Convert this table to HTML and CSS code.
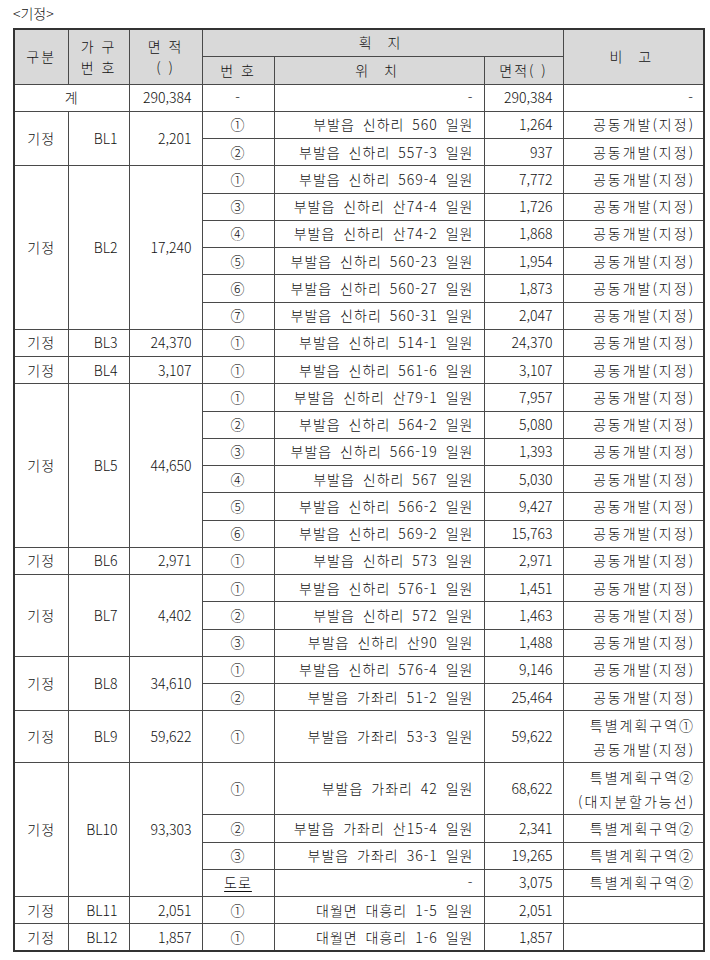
FILE: index.html
```html
<!DOCTYPE html>
<html lang="ko">
<head>
<meta charset="utf-8">
<link rel="stylesheet" href="styles.css">
</head>
<body>
<div class="page">
  <div class="title">&lt;기정&gt;</div>
  <table class="lots">
    <colgroup>
      <col class="c1"><col class="c2"><col class="c3"><col class="c4"><col class="c5"><col class="c6"><col class="c7">
    </colgroup>
    <thead>
      <tr class="h1">
        <th rowspan="2">구분</th>
        <th rowspan="2">가 구<br>번 호</th>
        <th rowspan="2">면 적<br>( )</th>
        <th colspan="3" class="wide">획 지</th>
        <th rowspan="2" class="wide">비 고</th>
      </tr>
      <tr class="h2">
        <th>번 호</th>
        <th class="wide">위 치</th>
        <th>면적( )</th>
      </tr>
    </thead>
    <tbody>
      <tr><td colspan="2" class="ctr">계</td><td class="num">290,384</td><td class="ctr">-</td><td class="loc">-</td><td class="num2">290,384</td><td class="rem">-</td></tr>

      <tr><td rowspan="2" class="ctr">기정</td><td rowspan="2" class="bl">BL1</td><td rowspan="2" class="num">2,201</td><td class="ctr">①</td><td class="loc">부발읍 신하리 560 일원</td><td class="num2">1,264</td><td class="rem">공동개발(지정)</td></tr>
      <tr><td class="ctr">②</td><td class="loc">부발읍 신하리 557-3 일원</td><td class="num2">937</td><td class="rem">공동개발(지정)</td></tr>

      <tr><td rowspan="6" class="ctr">기정</td><td rowspan="6" class="bl">BL2</td><td rowspan="6" class="num">17,240</td><td class="ctr">①</td><td class="loc">부발읍 신하리 569-4 일원</td><td class="num2">7,772</td><td class="rem">공동개발(지정)</td></tr>
      <tr><td class="ctr">③</td><td class="loc">부발읍 신하리 산74-4 일원</td><td class="num2">1,726</td><td class="rem">공동개발(지정)</td></tr>
      <tr><td class="ctr">④</td><td class="loc">부발읍 신하리 산74-2 일원</td><td class="num2">1,868</td><td class="rem">공동개발(지정)</td></tr>
      <tr><td class="ctr">⑤</td><td class="loc">부발읍 신하리 560-23 일원</td><td class="num2">1,954</td><td class="rem">공동개발(지정)</td></tr>
      <tr><td class="ctr">⑥</td><td class="loc">부발읍 신하리 560-27 일원</td><td class="num2">1,873</td><td class="rem">공동개발(지정)</td></tr>
      <tr><td class="ctr">⑦</td><td class="loc">부발읍 신하리 560-31 일원</td><td class="num2">2,047</td><td class="rem">공동개발(지정)</td></tr>

      <tr><td class="ctr">기정</td><td class="bl">BL3</td><td class="num">24,370</td><td class="ctr">①</td><td class="loc">부발읍 신하리 514-1 일원</td><td class="num2">24,370</td><td class="rem">공동개발(지정)</td></tr>
      <tr><td class="ctr">기정</td><td class="bl">BL4</td><td class="num">3,107</td><td class="ctr">①</td><td class="loc">부발읍 신하리 561-6 일원</td><td class="num2">3,107</td><td class="rem">공동개발(지정)</td></tr>

      <tr><td rowspan="6" class="ctr">기정</td><td rowspan="6" class="bl">BL5</td><td rowspan="6" class="num">44,650</td><td class="ctr">①</td><td class="loc">부발읍 신하리 산79-1 일원</td><td class="num2">7,957</td><td class="rem">공동개발(지정)</td></tr>
      <tr><td class="ctr">②</td><td class="loc">부발읍 신하리 564-2 일원</td><td class="num2">5,080</td><td class="rem">공동개발(지정)</td></tr>
      <tr><td class="ctr">③</td><td class="loc">부발읍 신하리 566-19 일원</td><td class="num2">1,393</td><td class="rem">공동개발(지정)</td></tr>
      <tr><td class="ctr">④</td><td class="loc">부발읍 신하리 567 일원</td><td class="num2">5,030</td><td class="rem">공동개발(지정)</td></tr>
      <tr><td class="ctr">⑤</td><td class="loc">부발읍 신하리 566-2 일원</td><td class="num2">9,427</td><td class="rem">공동개발(지정)</td></tr>
      <tr><td class="ctr">⑥</td><td class="loc">부발읍 신하리 569-2 일원</td><td class="num2">15,763</td><td class="rem">공동개발(지정)</td></tr>

      <tr><td class="ctr">기정</td><td class="bl">BL6</td><td class="num">2,971</td><td class="ctr">①</td><td class="loc">부발읍 신하리 573 일원</td><td class="num2">2,971</td><td class="rem">공동개발(지정)</td></tr>

      <tr><td rowspan="3" class="ctr">기정</td><td rowspan="3" class="bl">BL7</td><td rowspan="3" class="num">4,402</td><td class="ctr">①</td><td class="loc">부발읍 신하리 576-1 일원</td><td class="num2">1,451</td><td class="rem">공동개발(지정)</td></tr>
      <tr><td class="ctr">②</td><td class="loc">부발읍 신하리 572 일원</td><td class="num2">1,463</td><td class="rem">공동개발(지정)</td></tr>
      <tr><td class="ctr">③</td><td class="loc">부발읍 신하리 산90 일원</td><td class="num2">1,488</td><td class="rem">공동개발(지정)</td></tr>

      <tr><td rowspan="2" class="ctr">기정</td><td rowspan="2" class="bl">BL8</td><td rowspan="2" class="num">34,610</td><td class="ctr">①</td><td class="loc">부발읍 신하리 576-4 일원</td><td class="num2">9,146</td><td class="rem">공동개발(지정)</td></tr>
      <tr><td class="ctr">②</td><td class="loc">부발읍 가좌리 51-2 일원</td><td class="num2">25,464</td><td class="rem">공동개발(지정)</td></tr>

      <tr class="tall"><td class="ctr">기정</td><td class="bl">BL9</td><td class="num">59,622</td><td class="ctr">①</td><td class="loc">부발읍 가좌리 53-3 일원</td><td class="num2">59,622</td><td class="rem">특별계획구역①<br>공동개발(지정)</td></tr>

      <tr class="tall"><td rowspan="4" class="ctr">기정</td><td rowspan="4" class="bl">BL10</td><td rowspan="4" class="num">93,303</td><td class="ctr">①</td><td class="loc">부발읍 가좌리 42 일원</td><td class="num2">68,622</td><td class="rem">특별계획구역②<br>(대지분할가능선)</td></tr>
      <tr><td class="ctr">②</td><td class="loc">부발읍 가좌리 산15-4 일원</td><td class="num2">2,341</td><td class="rem">특별계획구역②</td></tr>
      <tr><td class="ctr">③</td><td class="loc">부발읍 가좌리 36-1 일원</td><td class="num2">19,265</td><td class="rem">특별계획구역②</td></tr>
      <tr><td class="ctr road">도로</td><td class="loc">-</td><td class="num2">3,075</td><td class="rem">특별계획구역②</td></tr>

      <tr><td class="ctr">기정</td><td class="bl">BL11</td><td class="num">2,051</td><td class="ctr">①</td><td class="loc">대월면 대흥리 1-5 일원</td><td class="num2">2,051</td><td class="rem"></td></tr>
      <tr><td class="ctr">기정</td><td class="bl">BL12</td><td class="num">1,857</td><td class="ctr">①</td><td class="loc">대월면 대흥리 1-6 일원</td><td class="num2">1,857</td><td class="rem"></td></tr>
    </tbody>
  </table>
</div>
</body>
</html>
```
FILE: styles.css
```css
html, body {
  margin: 0;
  padding: 0;
  background: #ffffff;
}

body {
  font-family: "Noto Sans CJK KR", "Noto Sans", sans-serif;
  font-weight: 300;
  color: #111111;
  font-size: 14px;
}

.page {
  padding: 3px 7px 0 13px;
}

.title {
  font-size: 14px;
  line-height: 20px;
  height: 20px;
}

.lots {
  margin-top: 5px;
  border-collapse: collapse;
  table-layout: fixed;
  width: 690px;
  border: 2px solid #333333;
}

.c1 { width: 54px; }
.c2 { width: 61px; }
.c3 { width: 73px; }
.c4 { width: 72px; }
.c5 { width: 210px; }
.c6 { width: 79px; }
.c7 { width: 141px; }

.lots th,
.lots td {
  border: 1px solid #4a4a4a;
  padding: 0;
  line-height: 23px;
  white-space: nowrap;
  overflow: hidden;
}

.lots th {
  background: #d9d9d9;
  font-weight: 300;
  text-align: center;
  letter-spacing: 2px;
  line-height: 21px;
}

.lots th.wide {
  letter-spacing: 6px;
}

.h1 { height: 27px; }
.h2 { height: 28px; }

.lots tbody tr { height: 27.25px; }
.lots tbody tr.tall { height: 52px; }

.ctr {
  text-align: center;
  letter-spacing: 1px;
}

.bl {
  text-align: right;
  padding-right: 11px !important;
}

.num {
  text-align: right;
  padding-right: 10px !important;
}

.num2 {
  text-align: right;
  padding-right: 10px !important;
}

.loc {
  text-align: right;
  padding-right: 10px !important;
  letter-spacing: 1px;
  word-spacing: 3px;
}

.rem {
  text-align: right;
  padding-right: 8px !important;
  letter-spacing: 2px;
}

.lots tr.tall .rem {
  line-height: 24px;
}

.road {
  text-decoration: underline;
  text-underline-offset: 3px;
}
```
